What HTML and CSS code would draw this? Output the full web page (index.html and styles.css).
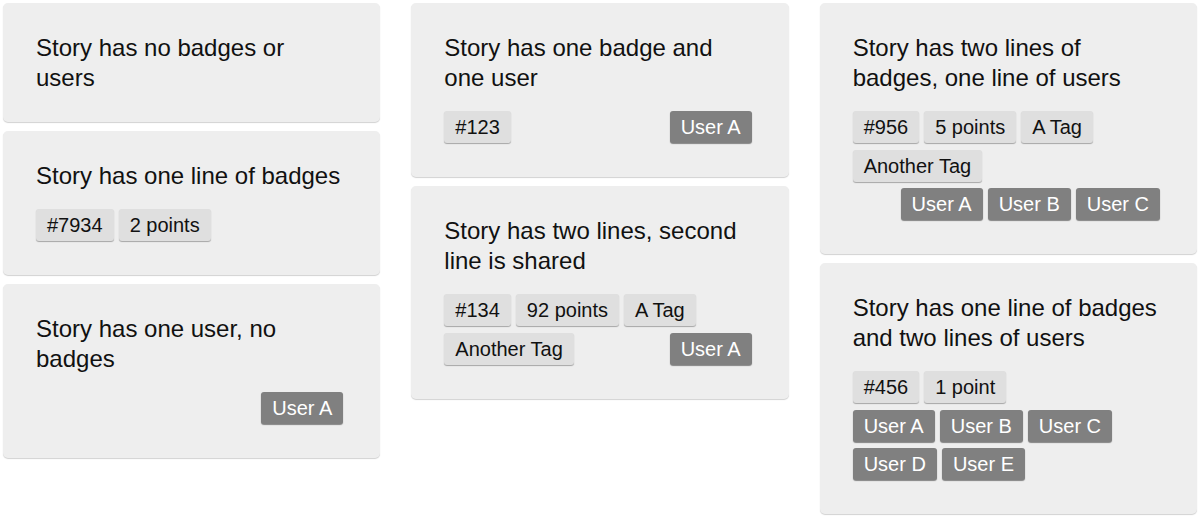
FILE: index.html
```html
<!DOCTYPE html>
<html lang="en">
<head>
    <meta charset="UTF-8">
    <title>Story cards</title>
    <link rel="stylesheet" href="styles.css">
</head>
<body>

<div class="board">
    <div class="column">
        <div class="story">
            <div class="title">Story has no badges or users</div>
        </div>
        <div class="story">
            <div class="title">Story has one line of badges</div>
            <div class="tags">
                <span class="badge">#7934</span>
                <span class="badge">2 points</span>
            </div>
        </div>
        <div class="story">
            <div class="title">Story has one user, no badges</div>
            <div class="tags">
                <div class="users">
                    <span class="badge user">User A</span>
                </div>
            </div>
        </div>
    </div>

    <div class="column">
        <div class="story">
            <div class="title">Story has one badge and one user</div>
            <div class="tags">
                <span class="badge">#123</span>
                <div class="users">
                    <span class="badge user">User A</span>
                </div>
            </div>
        </div>
        <div class="story">
            <div class="title">Story has two lines, second line is shared</div>
            <div class="tags">
                <span class="badge">#134</span>
                <span class="badge">92 points</span>
                <span class="badge">A Tag</span>
                <span class="badge">Another Tag</span>
                <div class="users">
                    <span class="badge user">User A</span>
                </div>
            </div>
        </div>
    </div>

    <div class="column">
        <div class="story">
            <div class="title">Story has two lines of badges, one line of users</div>
            <div class="tags">
                <span class="badge">#956</span>
                <span class="badge">5 points</span>
                <span class="badge">A Tag</span>
                <span class="badge">Another Tag</span>
                <div class="users">
                    <span class="badge user">User A</span>
                    <span class="badge user">User B</span>
                    <span class="badge user">User C</span>
                </div>
            </div>
        </div>
        <div class="story">
            <div class="title">Story has one line of badges and two lines of users</div>
            <div class="tags">
                <span class="badge">#456</span>
                <span class="badge">1 point</span>
                <div class="users">
                    <span class="badge user">User A</span>
                    <span class="badge user">User B</span>
                    <span class="badge user">User C</span>
                    <span class="badge user">User D</span>
                    <span class="badge user">User E</span>
                </div>
            </div>
        </div>
    </div>
</div>

</body>
</html>
```

FILE: styles.css
```css
body {
    margin: 0;
    padding: 3px;
    background: #fff;
    font-family: "Liberation Sans", Arial, Helvetica, sans-serif;
    color: #111;
}

.board {
    display: grid;
    grid-template-columns: repeat(3, 1fr);
    column-gap: 31px;
    align-items: start;
}

.column {
    display: flex;
    flex-direction: column;
    gap: 9px;
}

.story {
    background: #eeeeee;
    border-radius: 5px;
    box-shadow: 0 1px 1px rgba(0, 0, 0, 0.18);
    padding: 30px 37px 29px 33px;
}

.story .title {
    font-size: 24px;
    line-height: 30px;
}

/* badges wrap from the left, the users block is pushed to the right */
.tags {
    display: flex;
    flex-wrap: wrap;
    gap: 6.5px 5px;
    margin: 18px 0 5px;
}

.users {
    display: flex;
    flex-wrap: wrap;
    gap: 6.5px 5px;
    margin-left: auto;
}

.badge {
    display: inline-block;
    padding: 4px 11px;
    font-size: 20px;
    line-height: 24px;
    white-space: nowrap;
    color: #111;
    background: #dfdfdf;
    border-radius: 3px;
    box-shadow: 0 1px 1px rgba(0, 0, 0, 0.3);
}

.badge.user {
    color: #fff;
    background: #808080;
    box-shadow: 0 1px 1px rgba(0, 0, 0, 0.45);
}
```
